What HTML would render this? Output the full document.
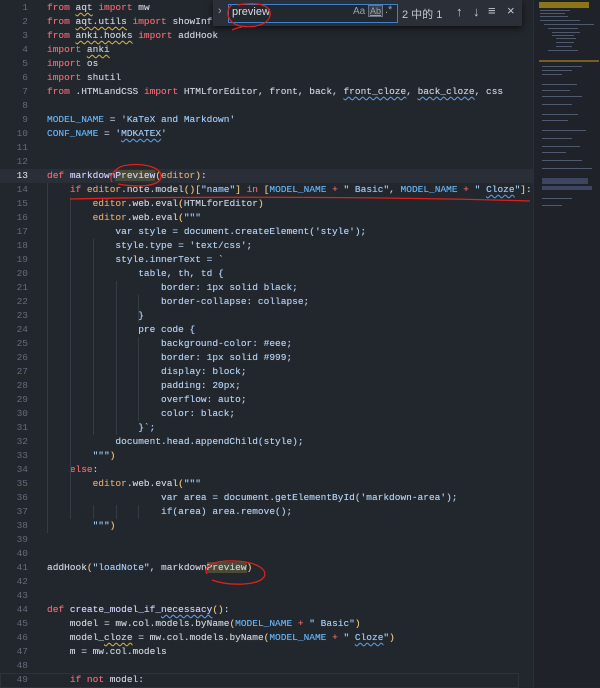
<!DOCTYPE html>
<html><head><meta charset="utf-8"><style>
html,body{margin:0;padding:0;width:600px;height:687px;overflow:hidden;background:#22262d;font-family:"Liberation Mono",monospace;}
#ed{position:absolute;left:0;top:0;width:533px;height:687px;background:#22262d;}
#mini{position:absolute;left:533px;top:0;width:67px;height:687px;background:#1f2329;border-left:1px solid #2a2e35;}
.ln{position:absolute;left:0;width:28px;text-align:right;color:#636b78;font-size:9.5px;line-height:14px;}
.cl{position:absolute;left:47px;white-space:pre;color:#c4ccd6;font-size:9.5px;line-height:14px;text-shadow:0 0 0.4px currentColor;}
.k{color:#e8666e}.s{color:#9cc5f2}.c{color:#61afef}.f{color:#c9cbf5}.p{color:#d8a06a}.y{color:#e5c07b}.j{color:#aecbec}.w{text-decoration:underline wavy #c9a227;text-decoration-thickness:1px;text-underline-offset:2px}.wb{text-decoration:underline wavy #4a8fd9;text-decoration-thickness:1px;text-underline-offset:2px}
.hl{background:#4b4a36}
.g{position:absolute;width:1px;background:#353a43}
#find{position:absolute;left:213px;top:0;width:309px;height:26px;background:#2b3038;box-shadow:0 2px 6px rgba(0,0,0,.6);font-family:"Liberation Sans","Noto Sans CJK SC",sans-serif;color:#c4c8ce;font-size:11px;}
#inp{position:absolute;left:15px;top:4px;width:168px;height:17px;border:1px solid #3b82d0;background:#23272e;}
</style></head><body>
<div id="ed">
<div style="position:absolute;left:0;top:169px;width:533px;height:14px;background:#2a2f37;"></div>
<div style="position:absolute;left:0;top:673px;width:517px;height:13px;border:1px solid #2e333b;"></div>
</div>
<div id="mini">
<div style="position:absolute;left:5px;top:2px;width:50px;height:6px;background:#a88a12;opacity:.8"></div>
<div style="position:absolute;left:5px;top:60px;width:60px;height:2px;background:#a0761a;opacity:.7"></div>
<svg width="67" height="220" style="position:absolute;left:0;top:0" fill="#4f5a6e">
<rect x="6" y="10" width="30" height="1"/><rect x="6" y="13" width="25" height="1"/><rect x="6" y="16" width="28" height="1"/>
<rect x="6" y="20" width="40" height="1"/><rect x="10" y="24" width="50" height="1"/><rect x="14" y="28" width="30" height="1"/>
<rect x="18" y="32" width="28" height="1"/><rect x="18" y="35" width="22" height="1"/><rect x="22" y="38" width="20" height="1"/>
<rect x="22" y="42" width="18" height="1"/><rect x="22" y="46" width="16" height="1"/><rect x="14" y="50" width="30" height="1"/>
<rect x="8" y="66" width="40" height="1"/><rect x="8" y="70" width="30" height="1"/><rect x="8" y="74" width="20" height="1"/>
<rect x="8" y="84" width="35" height="1"/><rect x="8" y="90" width="28" height="1"/><rect x="8" y="96" width="40" height="1"/>
<rect x="8" y="104" width="30" height="1"/><rect x="8" y="114" width="36" height="1"/><rect x="8" y="120" width="26" height="1"/>
<rect x="8" y="130" width="44" height="1"/><rect x="8" y="138" width="30" height="1"/><rect x="8" y="146" width="38" height="1"/>
<rect x="8" y="152" width="24" height="1"/><rect x="8" y="160" width="40" height="1"/><rect x="8" y="168" width="50" height="1"/>
<rect x="8" y="178" width="46" height="6" fill="#3d4560"/><rect x="8" y="186" width="50" height="4" fill="#3d4560"/>
<rect x="8" y="198" width="30" height="1"/><rect x="8" y="205" width="20" height="1"/>
</svg>
</div>
<div id="lines"></div>
<div id="find">
<span style="position:absolute;left:5px;top:5px;font-size:11px;color:#aaa">›</span>
<div id="inp"><span style="position:absolute;left:3px;top:1px;color:#d8dce2;font-size:11px">preview</span></div>
<span style="position:absolute;left:140px;top:6px;font-size:10px;color:#9aa0a8">Aa</span>
<span style="position:absolute;left:155px;top:5px;font-size:9px;color:#9aa0a8;border:1px solid #6b7280;background:#3a3f48;padding:0 1px;text-decoration:underline">Ab</span>
<span style="position:absolute;left:172px;top:4px;font-size:11px;color:#9aa0a8">.*</span>
<span style="position:absolute;left:189px;top:6px;font-size:11px;color:#c4c8ce">2 中的 1</span>
<span style="position:absolute;left:243px;top:4px;font-size:13px;color:#c4c8ce">↑</span>
<span style="position:absolute;left:260px;top:4px;font-size:13px;color:#c4c8ce">↓</span>
<span style="position:absolute;left:275px;top:3px;font-size:13px;color:#c4c8ce">≡</span>
<span style="position:absolute;left:294px;top:3px;font-size:13px;color:#c4c8ce">×</span>
</div>
<script>
const L=[
'<span class=k>from</span> <span class=w>aqt</span> <span class=k>import</span> mw',
'<span class=k>from</span> <span class=w>aqt.utils</span> <span class=k>import</span> showInfo',
'<span class=k>from</span> <span class=w>anki.hooks</span> <span class=k>import</span> addHook',
'<span class=k>import</span> <span class=w>anki</span>',
'<span class=k>import</span> os',
'<span class=k>import</span> shutil',
'<span class=k>from</span> .HTMLandCSS <span class=k>import</span> HTMLforEditor, front, back, <span class=wb>front_cloze</span>, <span class=wb>back_cloze</span>, css',
'',
'<span class=c>MODEL_NAME</span> = <span class=s>\'KaTeX and Markdown\'</span>',
'<span class=c>CONF_NAME</span> = <span class=s>\'<span class=wb>MDKATEX</span>\'</span>',
'','',
'<span class=k>def</span> <span class=f>markdown<span class=hl>Preview</span></span><span class=y>(</span><span class=p>editor</span><span class=y>)</span>:',
'    <span class=k>if</span> <span class=p>editor</span>.note.model<span class=y>()</span><span class=y>[</span><span class=s>"name"</span><span class=y>]</span> <span class=k>in</span> <span class=y>[</span><span class=c>MODEL_NAME</span> <span class=k>+</span> <span class=s>" Basic"</span>, <span class=c>MODEL_NAME</span> <span class=k>+</span> <span class=s>" <span class=wb>Cloze</span>"</span><span class=y>]</span>:',
'        <span class=p>editor</span>.web.eval<span class=y>(</span>HTMLforEditor<span class=y>)</span>',
'        <span class=p>editor</span>.web.eval<span class=y>(</span><span class=s>"""</span>',
'<span class=j>            var style = document.createElement(\'style\');</span>',
'<span class=j>            style.type = \'text/css\';</span>',
'<span class=j>            style.innerText = `</span>',
'<span class=j>                table, th, td {</span>',
'<span class=j>                    border: 1px solid black;</span>',
'<span class=j>                    border-collapse: collapse;</span>',
'<span class=j>                }</span>',
'<span class=j>                pre code {</span>',
'<span class=j>                    background-color: #eee;</span>',
'<span class=j>                    border: 1px solid #999;</span>',
'<span class=j>                    display: block;</span>',
'<span class=j>                    padding: 20px;</span>',
'<span class=j>                    overflow: auto;</span>',
'<span class=j>                    color: black;</span>',
'<span class=j>                }`;</span>',
'<span class=j>            document.head.appendChild(style);</span>',
'        <span class=s>"""</span><span class=y>)</span>',
'    <span class=k>else</span>:',
'        <span class=p>editor</span>.web.eval<span class=y>(</span><span class=s>"""</span>',
'<span class=j>                    var area = document.getElementById(\'markdown-area\');</span>',
'<span class=j>                    if(area) area.remove();</span>',
'        <span class=s>"""</span><span class=y>)</span>',
'','',
'addHook<span class=y>(</span><span class=s>"loadNote"</span>, markdown<span class=hl>Preview</span><span class=y>)</span>',
'','',
'<span class=k>def</span> <span class=f>create_model_if_<span class=wb>necessacy</span></span><span class=y>()</span>:',
'    model = mw.col.models.byName<span class=y>(</span><span class=c>MODEL_NAME</span> <span class=k>+</span> <span class=s>" Basic"</span><span class=y>)</span>',
'    model_<span class=w>cloze</span> = mw.col.models.byName<span class=y>(</span><span class=c>MODEL_NAME</span> <span class=k>+</span> <span class=s>" <span class=wb>Cloze</span>"</span><span class=y>)</span>',
'    m = mw.col.models',
'',
'    <span class=k>if</span> <span class=k>not</span> model:'
];
let h='';
L.forEach((t,i)=>{const y=1+i*14;
h+=`<div class=ln style="top:${y}px;${i==12?'color:#e6e6e6':''}">${i+1}</div><div class=cl style="top:${y}px">${t}</div>`;});
const G=[[47,183,533],[70,197,519],[93,239,435],[116,281,435],[138,295,323],[138,337,421],[70,491,519],[93,505,519],[116,505,519],[138,505,519]];
G.forEach(g=>{h+=`<div class=g style="left:${g[0]}px;top:${g[1]}px;height:${g[2]-g[1]}px"></div>`});
document.getElementById('lines').innerHTML=h;
</script>
<svg width="600" height="687" style="position:absolute;left:0;top:0;pointer-events:none" fill="none" stroke="#e0201c" stroke-width="1.3">
<path d="M232 5 C226 8 225 22 240 26 C258 29 272 22 270 12 C268 4 255 2 238 5"/>
<path d="M242 27 Q236 28 232 30"/>
<path d="M112 182 C108 176 116 166 128 165 C146 163 162 168 161 177 C160 186 140 188 118 184"/>
<path d="M70 199 C200 196 400 197 530 201"/>
<path d="M207 574 C202 566 214 560 235 561 C258 562 268 570 264 577 C258 586 228 586 212 580"/>
</svg>
</body></html>
